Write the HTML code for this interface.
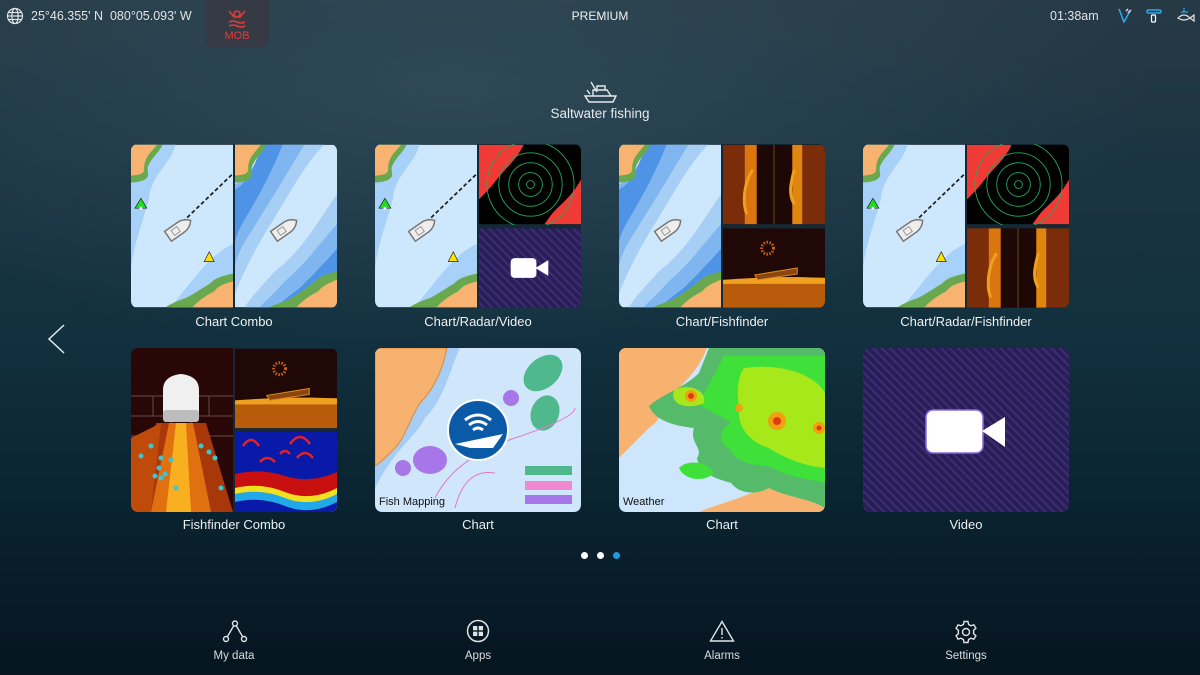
<!DOCTYPE html>
<html><head><meta charset="utf-8"><style>
*{margin:0;padding:0;box-sizing:border-box}
body{width:1200px;height:675px;overflow:hidden;font-family:"Liberation Sans",sans-serif;color:#e6e9ec;
background:radial-gradient(ellipse 700px 260px at 450px 90px,rgba(60,90,105,.5),transparent),linear-gradient(#263a46 0%,#1b3441 25%,#12303f 50%,#0a2330 75%,#061520 100%);position:relative}
.abs{position:absolute}
.tile{position:absolute;width:206px;height:164px;border-radius:7px;overflow:hidden;background:#0d2230}
.tile svg{position:absolute}
.lbl{position:absolute;width:206px;text-align:center;font-size:13px;color:#eef0f2}
.nav{position:absolute;width:120px;text-align:center;font-size:11.5px;color:#d8dcdf;top:650px}
.tag{position:absolute;left:4px;bottom:4px;font-size:11px;color:#111}
</style></head><body>
<svg width="0" height="0" style="position:absolute">
<defs>
<symbol id="boat" viewBox="-10 -16 20 32"><path d="M-6 13V-3Q-6 -10 0 -15 6 -10 6 -3V13Z" fill="#eee" stroke="#777" stroke-width="1.5"/><path d="M-3 0H3V7H-3Z" fill="none" stroke="#999"/></symbol>
<symbol id="chart" viewBox="0 0 103 164">
<rect width="103" height="164" fill="#cde8fc"/>
<path d="M0 0H45C40 20 20 30 18 55 8 90 0 110 0 130Z" fill="#a7d1f8"/>
<path d="M103 100C80 110 60 140 40 164H103Z" fill="#a7d1f8"/>
<path d="M0 0H32C28 8 22 12 18 20 14 26 22 32 12 36 6 38 2 38 0 38Z" fill="#6aa84f"/>
<path d="M0 0H26C22 6 16 10 14 18 12 24 16 28 8 30 4 31 0 31 0 31Z" fill="#f7b36f"/>
<path d="M103 130C95 132 85 134 80 140 70 146 65 150 55 155 45 158 38 162 35 164H103Z" fill="#6aa84f"/>
<path d="M103 138C95 140 88 142 84 148 76 152 70 156 62 164H103Z" fill="#f7b36f"/>
<path d="M52 78L102 30" stroke="#222" stroke-width="1.8" stroke-dasharray="4 2.5"/>
<g transform="translate(48,85) rotate(55)"><use href="#boat" x="-10" y="-16" width="20" height="32"/></g>
<path d="M4 64L10 54 16 64Z" fill="#22dd22" stroke="#222" stroke-width=".7"/><circle cx="10" cy="64" r="1.5" fill="#fff"/>
<path d="M74 118L84 118 79 108Z" fill="#ffe000" stroke="#222" stroke-width=".7"/>
</symbol>
<symbol id="chart2" viewBox="0 0 103 164">
<rect width="103" height="164" fill="#cde8fc"/>
<path d="M0 30C20 25 30 10 40 0H90C70 20 55 50 30 90 18 110 8 130 0 150Z" fill="#a7cff6"/>
<path d="M0 40C15 35 25 15 32 0H70C55 25 40 50 18 85 8 100 0 115 0 125Z" fill="#7fb6f0"/>
<path d="M0 45C12 40 20 20 28 0H48C38 25 28 45 10 75 4 85 0 95 0 100Z" fill="#4f93e6"/>
<path d="M103 50C85 75 70 105 40 128 25 145 15 155 10 164H103Z" fill="#a7cff6"/>
<path d="M103 80C85 100 70 122 50 138 40 150 30 158 25 164H103Z" fill="#7fb6f0"/>
<path d="M103 105C90 120 78 132 65 145 55 152 48 158 42 164H103Z" fill="#4f93e6"/>
<path d="M0 0H32C28 8 22 12 18 20 14 26 22 32 12 36 6 38 2 38 0 38Z" fill="#6aa84f"/>
<path d="M0 0H26C22 6 16 10 14 18 12 24 16 28 8 30 4 31 0 31 0 31Z" fill="#f7b36f"/>
<path d="M103 128C92 130 84 134 78 140 70 146 62 152 55 156 45 160 38 162 35 164H103Z" fill="#6aa84f"/>
<path d="M103 136C95 140 88 142 84 148 76 152 70 156 62 164H103Z" fill="#f7b36f"/>
<g transform="translate(50,85) rotate(55)"><use href="#boat" x="-10" y="-16" width="20" height="32"/></g>
</symbol>
<symbol id="radar" viewBox="0 0 103 80">
<rect width="103" height="80" fill="#000"/>
<path d="M0 0H45C38 15 28 22 18 35 10 45 5 50 0 55Z" fill="#f03a35"/>
<path d="M103 35C95 50 85 58 75 68 70 74 68 78 66 80H103Z" fill="#f03a35"/>
<g fill="none" stroke="#1faa5a" stroke-width=".9"><circle cx="52" cy="40" r="4"/><circle cx="52" cy="40" r="12"/><circle cx="52" cy="40" r="22"/><circle cx="52" cy="40" r="32"/><circle cx="52" cy="40" r="44"/></g>
</symbol>
<pattern id="stripe" width="6" height="6" patternUnits="userSpaceOnUse" patternTransform="rotate(-45)"><rect width="6" height="6" fill="#2a1f55"/><rect width="2" height="6" fill="#3b2d78"/></pattern>
<symbol id="video" viewBox="0 0 103 80">
<rect width="103" height="80" fill="url(#stripe)"/>
<rect x="32" y="30" width="26" height="20" rx="4" fill="#fff"/><path d="M57 40L70 32V48Z" fill="#fff"/>
</symbol>
<symbol id="ffside" viewBox="0 0 103 80">
<rect width="103" height="80" fill="#1e0806"/>
<rect x="0" y="0" width="34" height="80" fill="#7a2d08"/><rect x="22" y="0" width="12" height="80" fill="#d9760f"/>
<rect x="70" y="0" width="33" height="80" fill="#7a2d08"/><rect x="70" y="0" width="10" height="80" fill="#e0860f"/>
<rect x="51" y="0" width="1" height="80" fill="#6b4a20"/>
<path d="M30 25C20 40 20 60 24 70" stroke="#f0a020" stroke-width="3" fill="none"/>
<path d="M72 25C68 40 66 50 72 60" stroke="#f0a020" stroke-width="3" fill="none"/>
</symbol>
<symbol id="ffdown" viewBox="0 0 103 80">
<rect width="103" height="80" fill="#200806"/>
<path d="M0 52C30 50 60 48 103 50V80H0Z" fill="#b85c0c"/>
<path d="M0 52C30 50 60 48 103 50V56H0Z" fill="#f0a020"/>
<path d="M32 47L75 40V46L35 52Z" fill="#8a4510" stroke="#e08a18"/>
<circle cx="45" cy="20" r="6" fill="none" stroke="#c8641a" stroke-dasharray="1.5 1.5" stroke-width="3"/>
</symbol>
</defs></svg>

<!-- top bar -->
<svg class="abs" style="left:6px;top:7px" width="18" height="18" viewBox="0 0 18 18" fill="none" stroke="#dfe3e6" stroke-width="1.2"><circle cx="9" cy="9" r="7.5"/><ellipse cx="9" cy="9" rx="3.2" ry="7.5"/><path d="M1.5 9H16.5M2.5 5.5H15.5M2.5 12.5H15.5"/></svg>
<div class="abs" style="left:31px;top:9px;font-size:12.5px;color:#dfe3e6">25°46.355' N &nbsp;080°05.093' W</div>
<div class="abs" style="left:205px;top:0;width:64px;height:47px;background:#363a45;border-radius:0 0 6px 6px"></div>
<svg class="abs" style="left:226px;top:9px" width="22" height="20" viewBox="0 0 22 20" fill="none" stroke="#e03a3a" stroke-width="1.6"><circle cx="11" cy="5" r="3"/><path d="M3 2L8 8H14L19 2M3 13Q7 11 11 13T19 13M3 17Q7 15 11 17T19 17"/></svg>
<div class="abs" style="left:205px;top:30px;width:64px;text-align:center;font-size:11px;color:#e03a3a">MOB</div>
<div class="abs" style="left:0;width:1200px;top:9px;text-align:center;font-size:12px;color:#eef0f2">PREMIUM</div>
<div class="abs" style="left:1050px;top:9px;font-size:12.5px;color:#dfe3e6">01:38am</div>
<svg class="abs" style="left:1118px;top:7px" width="16" height="16" viewBox="0 0 16 16" fill="none" stroke="#2ea6e6" stroke-width="1.6"><path d="M1 2L6 15 12 4"/><path d="M8 4L10 2M10 6L13 3" stroke="#ccd"/></svg>
<svg class="abs" style="left:1145px;top:8px" width="18" height="16" viewBox="0 0 18 16" fill="none" stroke="#2ea6e6" stroke-width="1.6"><rect x="2" y="2" width="14" height="3" rx="1.5"/><rect x="6.5" y="7" width="4" height="7" rx="1" stroke="#fff" stroke-width="1.2"/></svg>
<svg class="abs" style="left:1175px;top:7px" width="20" height="16" viewBox="0 0 20 16" fill="none" stroke="#dfe3e6" stroke-width="1.2"><path d="M9 1V5M6 5H13" stroke="#2ea6e6"/><path d="M3 11Q9 5 15 11Q9 15 3 11ZM15 11L19 8V14Z"/></svg>

<!-- profile -->
<svg class="abs" style="left:583px;top:80px" width="36" height="24" viewBox="0 0 36 24" fill="none" stroke="#e6e9ec" stroke-width="1.4"><path d="M8 2L14 12M4 10L7 14M2 16H33L30 22H6Z M10 16V10H24L28 16M14 10V6H22V10"/></svg>
<div class="abs" style="left:0;width:1200px;top:106px;text-align:center;font-size:13.5px;color:#e6e9ec">Saltwater fishing</div>

<svg class="abs" style="left:45px;top:323px" width="22" height="32" viewBox="0 0 22 32" fill="none" stroke="#e6e9ec" stroke-width="1.5"><path d="M19 2L4 16 19 30"/></svg>

<!-- row 1 -->
<div class="tile" style="left:131px;top:144px;background:#152835">
<svg style="left:0;top:0" width="102" height="164"><use href="#chart"/></svg>
<svg style="left:104px;top:0" width="102" height="164"><use href="#chart2"/></svg>
</div>
<div class="lbl" style="left:131px;top:314px">Chart Combo</div>

<div class="tile" style="left:375px;top:144px;background:#152835">
<svg style="left:0;top:0" width="102" height="164"><use href="#chart"/></svg>
<svg style="left:104px;top:0" width="102" height="81"><use href="#radar"/></svg>
<svg style="left:104px;top:84px" width="102" height="80"><use href="#video"/></svg>
</div>
<div class="lbl" style="left:375px;top:314px">Chart/Radar/Video</div>

<div class="tile" style="left:619px;top:144px;background:#152835">
<svg style="left:0;top:0" width="102" height="164"><use href="#chart2"/></svg>
<svg style="left:104px;top:0" width="102" height="81"><use href="#ffside"/></svg>
<svg style="left:104px;top:84px" width="102" height="80"><use href="#ffdown"/></svg>
</div>
<div class="lbl" style="left:619px;top:314px">Chart/Fishfinder</div>

<div class="tile" style="left:863px;top:144px;background:#152835">
<svg style="left:0;top:0" width="102" height="164"><use href="#chart"/></svg>
<svg style="left:104px;top:0" width="102" height="81"><use href="#radar"/></svg>
<svg style="left:104px;top:84px" width="102" height="80"><use href="#ffside"/></svg>
</div>
<div class="lbl" style="left:863px;top:314px">Chart/Radar/Fishfinder</div>

<!-- row 2 -->
<div class="tile" style="left:131px;top:348px;background:#152835">
<svg style="left:0;top:0" width="102" height="164" viewBox="0 0 102 164">
<rect width="102" height="164" fill="#2a0707"/>
<g stroke="#6a4a48" stroke-width="1" fill="none"><path d="M0 48H102M0 68H102M0 88H102M22 48V68M78 48V68M40 68V88M60 68V88"/></g>
<path d="M25 75L75 75 102 164H0Z" fill="#a8380a"/>
<path d="M0 90L30 75 20 164H0Z" fill="#c04a0a"/>
<path d="M38 75L62 75 80 164H20Z" fill="#e07010"/>
<path d="M45 75L55 75 60 164H35Z" fill="#f8b020"/>
<path d="M32 70V42Q32 28 50 26Q68 28 68 42V70Z" fill="#f0f0f0"/>
<rect x="32" y="62" width="36" height="12" rx="3" fill="#bcbcbc"/>
<g fill="#3bc6d6"><circle cx="20" cy="98" r="2.5"/><circle cx="30" cy="110" r="2.5"/><circle cx="24" cy="128" r="2.5"/><circle cx="30" cy="130" r="2.5"/><circle cx="34" cy="126" r="2.5"/><circle cx="70" cy="98" r="2.5"/><circle cx="78" cy="104" r="2.5"/><circle cx="84" cy="110" r="2.5"/><circle cx="10" cy="108" r="2.5"/><circle cx="40" cy="112" r="2.5"/><circle cx="28" cy="120" r="2.5"/><circle cx="90" cy="140" r="2.5"/><circle cx="45" cy="140" r="2.5"/></g>
</svg>
<svg style="left:104px;top:0" width="102" height="81"><use href="#ffdown"/></svg>
<svg style="left:104px;top:84px" width="102" height="80" viewBox="0 0 102 80">
<rect width="102" height="80" fill="#0a1aa8"/>
<path d="M0 42Q25 36 50 44T102 40V80H0Z" fill="#c81010"/>
<path d="M0 56Q25 50 50 60T102 56V80H0Z" fill="#f0e020"/>
<path d="M0 62Q25 56 50 66T102 62V80H0Z" fill="#20a8e8"/>
<path d="M0 70Q25 64 50 74T102 70V80H0Z" fill="#0a1aa8"/>
<g fill="none" stroke-width="2.5"><path d="M8 14Q16 2 24 14M55 12Q65 -2 75 12M25 30Q32 22 40 30M62 26Q70 16 78 26M45 22Q50 16 55 22" stroke="#e82020"/></g>
</svg>
</div>
<div class="lbl" style="left:131px;top:517px">Fishfinder Combo</div>

<div class="tile" style="left:375px;top:348px">
<svg style="left:0;top:0" width="206" height="164" viewBox="0 0 206 164">
<rect width="206" height="164" fill="#cfe6fb"/>
<path d="M0 0H85C75 20 70 50 50 70 40 90 20 100 0 140Z" fill="#a5cdf5"/>
<path d="M0 0H72C68 20 60 40 45 55 35 70 30 90 20 100 10 110 5 115 0 118Z" fill="#f6b26e" stroke="#d98a3a"/>
<ellipse cx="168" cy="25" rx="22" ry="15" transform="rotate(-40 168 25)" fill="#4fb88c"/>
<ellipse cx="170" cy="65" rx="14" ry="18" transform="rotate(20 170 65)" fill="#4fb88c"/>
<circle cx="136" cy="50" r="8" fill="#a776e8"/>
<ellipse cx="55" cy="112" rx="17" ry="14" fill="#a776e8"/>
<circle cx="28" cy="120" r="8" fill="#a776e8"/>
<path d="M60 150Q80 110 140 90T200 60M80 160Q90 120 120 125" stroke="#e07bc8" fill="none"/>
<circle cx="103" cy="82" r="30" fill="#0b5aa8" stroke="#fff" stroke-width="2"/>
<path d="M90 72Q103 62 116 72M94 77Q103 70 112 77M98 82Q103 78 108 82" stroke="#fff" stroke-width="3" fill="none"/>
<path d="M80 96L128 86 118 100 95 100Z" fill="#fff"/>
<rect x="150" y="118" width="47" height="9" fill="#4fb88c"/><rect x="150" y="133" width="47" height="9" fill="#f08ad0"/><rect x="150" y="147" width="47" height="9" fill="#a776e8"/>
</svg>
<div class="tag">Fish Mapping</div>
</div>
<div class="lbl" style="left:375px;top:517px">Chart</div>

<div class="tile" style="left:619px;top:348px">
<svg style="left:0;top:0" width="206" height="164" viewBox="0 0 206 164">
<rect width="206" height="164" fill="#cde6fb"/>
<path d="M0 0H88C80 20 70 30 55 45 40 60 45 70 30 80 20 90 10 100 0 110Z" fill="#f8b26f"/>
<path d="M206 110C180 115 160 120 150 135 130 150 100 155 80 164H206Z" fill="#f8b26f"/>
<path d="M90 0H206V160C190 150 170 150 150 140 135 148 120 145 112 135 95 130 80 125 78 110 85 100 70 95 75 80 55 78 35 72 30 58 45 45 65 40 80 25Z" fill="#55bb6a"/>
<path d="M105 8H206V135C185 130 165 128 150 118 130 118 115 112 110 100 98 95 100 80 112 75 98 65 85 62 80 55 95 45 105 30Z" fill="#3fe03a"/>
<path d="M125 20C160 15 195 25 206 45V120C185 118 165 110 150 100 132 95 118 80 120 60 118 45 118 30 125 20Z" fill="#a6e81a"/>
<path d="M55 42C70 35 88 42 85 55 70 62 50 58 55 42Z" fill="#a6e81a"/>
<path d="M60 120C70 110 90 115 95 125 85 135 65 132 60 120Z" fill="#3fe03a"/>
<g fill="#f0a010"><circle cx="158" cy="73" r="9"/><circle cx="72" cy="48" r="6"/><circle cx="200" cy="80" r="6"/><circle cx="120" cy="60" r="4"/></g>
<g fill="#e03a10"><circle cx="158" cy="73" r="4"/><circle cx="72" cy="48" r="3"/><circle cx="200" cy="80" r="2.5"/></g>
</svg>
<div class="tag">Weather</div>
</div>
<div class="lbl" style="left:619px;top:517px">Chart</div>

<div class="tile" style="left:863px;top:348px">
<svg style="left:0;top:0" width="206" height="164" viewBox="0 0 206 164">
<rect width="206" height="164" fill="url(#stripe)"/>
<rect x="63" y="62" width="57" height="43" rx="7" fill="#fff" stroke="#8a6ae0" stroke-width="1.5"/>
<path d="M119 83L142 69V99Z" fill="#fff"/>
</svg>
</div>
<div class="lbl" style="left:863px;top:517px">Video</div>

<!-- dots -->
<div class="abs" style="left:581px;top:552px;width:7px;height:7px;border-radius:50%;background:#fff"></div>
<div class="abs" style="left:597px;top:552px;width:7px;height:7px;border-radius:50%;background:#fff"></div>
<div class="abs" style="left:613px;top:552px;width:7px;height:7px;border-radius:50%;background:#1e9be0"></div>

<!-- bottom nav -->
<svg class="abs" style="left:222px;top:620px" width="26" height="24" viewBox="0 0 26 24" fill="none" stroke="#e0e3e6" stroke-width="1.4"><circle cx="13" cy="3.5" r="2.5"/><circle cx="4" cy="19" r="2.5"/><circle cx="22" cy="19" r="2.5"/><path d="M11.8 5.6L5.3 16.8M14.2 5.6L20.7 16.8"/></svg>
<div class="nav" style="left:174px">My data</div>
<svg class="abs" style="left:466px;top:619px" width="24" height="24" viewBox="0 0 24 24" fill="none" stroke="#e0e3e6" stroke-width="1.5"><circle cx="12" cy="12" r="10.5"/><g fill="#e0e3e6" stroke="none"><rect x="7" y="7" width="4.3" height="4.3"/><rect x="12.7" y="7" width="4.3" height="4.3"/><rect x="7" y="12.7" width="4.3" height="4.3"/><rect x="12.7" y="12.7" width="4.3" height="4.3"/></g></svg>
<div class="nav" style="left:418px">Apps</div>
<svg class="abs" style="left:709px;top:620px" width="26" height="22" viewBox="0 0 26 22" fill="none" stroke="#e0e3e6" stroke-width="1.4"><path d="M13 1.5L24.5 21H1.5Z"/><path d="M13 8V15M13 17V18.5"/></svg>
<div class="nav" style="left:662px">Alarms</div>
<svg class="abs" style="left:954px;top:620px" width="24" height="24" viewBox="0 0 24 24" fill="none" stroke="#e0e3e6" stroke-width="1.4"><path d="M10 1.5H14L14.6 4.5 17 5.8 19.9 4.8 21.9 8.2 19.6 10.3V13.7L21.9 15.8 19.9 19.2 17 18.2 14.6 19.5 14 22.5H10L9.4 19.5 7 18.2 4.1 19.2 2.1 15.8 4.4 13.7V10.3L2.1 8.2 4.1 4.8 7 5.8 9.4 4.5Z"/><circle cx="12" cy="12" r="3.5"/></svg>
<div class="nav" style="left:906px">Settings</div>
</body></html>
